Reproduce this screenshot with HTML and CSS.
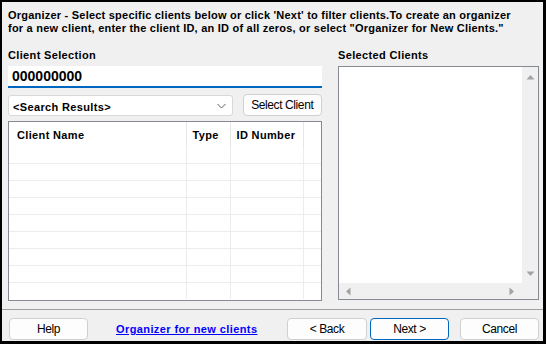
FILE: index.html
```html
<!DOCTYPE html>
<html>
<head>
<meta charset="utf-8">
<link rel="stylesheet" href="styles.css">
</head>
<body>
<div class="window">
  <p class="intro">Organizer - Select specific clients below or click 'Next' to filter clients.To create an organizer<br>for a new client, enter the client ID, an ID of all zeros, or select "Organizer for New Clients."</p>
  <div class="main">
    <div class="left">
      <div class="label">Client Selection</div>
      <div class="input">000000000</div>
      <div class="combo-row">
        <div class="combo">
          <span>&lt;Search Results&gt;</span>
          <svg class="chev" width="9" height="6" viewBox="0 0 9 6"><path d="M0.5 1 L4.5 5 L8.5 1" fill="none" stroke="#606060" stroke-width="1"/></svg>
        </div>
        <button class="btn select">Select Client</button>
      </div>
      <div class="grid">
        <table>
          <thead>
            <tr><th class="c1">Client Name</th><th class="c2">Type</th><th class="c3">ID Number</th><th class="c4"></th></tr>
          </thead>
          <tbody>
            <tr><td></td><td></td><td></td><td></td></tr>
            <tr><td></td><td></td><td></td><td></td></tr>
            <tr><td></td><td></td><td></td><td></td></tr>
            <tr><td></td><td></td><td></td><td></td></tr>
            <tr><td></td><td></td><td></td><td></td></tr>
            <tr><td></td><td></td><td></td><td></td></tr>
            <tr><td></td><td></td><td></td><td></td></tr>
            <tr><td></td><td></td><td></td><td></td></tr>
            <tr class="last"><td></td><td></td><td></td><td></td></tr>
          </tbody>
        </table>
      </div>
    </div>
    <div class="right">
      <div class="label">Selected Clients</div>
      <div class="listbox">
        <div class="lb-top">
          <div class="lb-content"></div>
          <div class="vscroll">
            <svg width="9" height="6" viewBox="0 0 9 6"><path d="M0.5 5.5 L4.5 1 L8.5 5.5 Z" fill="#a3a3a3"/></svg>
            <svg width="9" height="6" viewBox="0 0 9 6"><path d="M0.5 0.5 L4.5 5 L8.5 0.5 Z" fill="#a3a3a3"/></svg>
          </div>
        </div>
        <div class="lb-bottom">
          <div class="hscroll">
            <svg width="6" height="9" viewBox="0 0 6 9"><path d="M5.5 0.5 L1 4.5 L5.5 8.5 Z" fill="#a3a3a3"/></svg>
            <svg width="6" height="9" viewBox="0 0 6 9"><path d="M0.5 0.5 L5 4.5 L0.5 8.5 Z" fill="#a3a3a3"/></svg>
          </div>
          <div class="corner"></div>
        </div>
      </div>
    </div>
  </div>
  <div class="sep"></div>
  <div class="footer">
    <button class="btn help">Help</button>
    <a class="link" href="#">Organizer for new clients</a>
    <div class="spacer"></div>
    <button class="btn back">&lt; Back</button>
    <button class="btn next">Next &gt;</button>
    <button class="btn cancel">Cancel</button>
  </div>
</div>
</body>
</html>
```
FILE: styles.css
```css
html, body {
  margin: 0;
  padding: 0;
  background: #000;
  width: 546px;
  height: 344px;
  overflow: hidden;
}
.window {
  margin: 2px 3px 3px 2px;
  width: 541px;
  height: 339px;
  background: #f0f0f0;
  display: flex;
  flex-direction: column;
  font-family: "Liberation Sans", Arial, sans-serif;
  font-size: 11px;
  font-weight: bold;
  color: #000;
}
.intro {
  margin: 0;
  padding: 7px 0 0 6px;
  line-height: 13px;
  height: 34px;
  letter-spacing: 0.22px;
  white-space: nowrap;
}
.main {
  display: flex;
  padding: 6px 0 0 6px;
  gap: 16px;
}
.label {
  line-height: 13px;
  letter-spacing: 0.35px;
  height: 13px;
}
.left {
  width: 314px;
  display: flex;
  flex-direction: column;
}
.input {
  margin-top: 4px;
  height: 20px;
  background: #fff;
  border-bottom: 2px solid #0067c0;
  font-size: 14px;
  line-height: 20px;
  padding-left: 4px;
  box-sizing: content-box;
}
.combo-row {
  display: flex;
  margin-top: 7px;
  align-items: flex-start;
}
.combo {
  width: 214px;
  height: 19px;
  background: #fff;
  border: 1px solid #d9d9d9;
  border-radius: 3px;
  display: flex;
  align-items: center;
  justify-content: space-between;
  padding: 0 6px 0 4px;
  box-sizing: content-box;
  letter-spacing: 0.35px;
}
.combo span { position: relative; top: 1px; }
.chev { margin-top: 1px; }
.btn {
  font-family: "Liberation Sans", Arial, sans-serif;
  font-size: 12px;
  font-weight: normal;
  letter-spacing: -0.4px;
  color: #000;
  background: #fdfdfd;
  border: 1px solid #d0d0d0;
  border-radius: 4px;
  height: 22px;
  padding: 0;
  box-sizing: border-box;
}
.select {
  width: 80px;
  height: 22px;
  margin-left: 10px;
  margin-top: -1px;
}
.grid {
  margin-top: 5px;
  width: 314px;
  height: 180px;
  border: 1px solid #868a91;
  box-sizing: border-box;
  background: #fff;
  overflow: hidden;
}
table {
  border-collapse: collapse;
  table-layout: fixed;
  width: 312px;
}
th {
  height: 25px;
  padding: 7px 0 0 6px;
  box-sizing: border-box;
  text-align: left;
  vertical-align: top;
  line-height: 13px;
  letter-spacing: 0.35px;
  white-space: nowrap;
}
th.c1 { width: 177px; padding-left: 8px; }
th.c2 { width: 44px; }
th.c3 { width: 73px; }
th.c4 { width: 18px; border-right: none; }
th.c1, th.c2, th.c3 { border-right: 1px solid #e6e6e6; }
td {
  height: 16px;
  padding: 0;
  border-bottom: 1px solid #ececec;
  border-right: 1px solid #ececec;
}
td:last-child { border-right: none; }
tr.last td { border-bottom: none; }
.right {
  width: 201px;
  display: flex;
  flex-direction: column;
}
.listbox {
  margin-top: 4px;
  height: 234px;
  border: 1px solid #868a91;
  box-sizing: border-box;
  background: #fff;
  display: flex;
  flex-direction: column;
}
.lb-top {
  flex: 1;
  display: flex;
}
.lb-content { flex: 1; }
.vscroll {
  width: 16px;
  background: #f0f0f0;
  display: flex;
  flex-direction: column;
  justify-content: space-between;
  align-items: center;
  padding: 7px 0 6px;
}
.lb-bottom {
  height: 16px;
  display: flex;
}
.hscroll {
  flex: 1;
  background: #f0f0f0;
  display: flex;
  justify-content: space-between;
  align-items: center;
  padding: 0 7px 0 6px;
}
.corner {
  width: 16px;
  background: #f0f0f0;
}
.sep {
  margin-top: 8px;
  height: 1px;
  background: #a0a0a0;
}
.footer {
  display: flex;
  align-items: center;
  padding: 8px 4px 0 7px;
}
.help { width: 79px; }
.link {
  margin-left: 28px;
  color: #0000ff;
  text-decoration: underline;
  letter-spacing: 0.4px;
}
.spacer { flex: 1; }
.back { width: 80px; }
.next { width: 79px; margin-left: 3px; border-color: #0067c0; }
.cancel { width: 79px; margin-left: 11px; }
```
